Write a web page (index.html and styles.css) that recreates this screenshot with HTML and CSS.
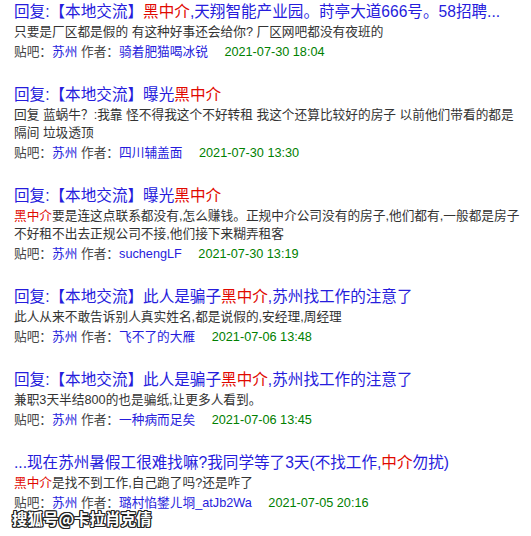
FILE: index.html
```html
<!DOCTYPE html>
<html lang="zh-CN">
<head>
    <meta charset="UTF-8">
    <title>贴吧搜索</title>
    <link rel="stylesheet" href="styles.css">
</head>
<body>
    <div class="s_post_list">
        <div class="s_post">
            <div class="p_title"><a href="#">回复:【本地交流】<em>黑中介</em>,天翔智能产业园。莳亭大道666号。58招聘...</a></div>
            <div class="p_content">只要是厂区都是假的 有这种好事还会给你? 厂区网吧都没有夜班的</div>
            <div class="p_meta">贴吧：<a href="#">苏州</a> 作者：<a href="#">骑着肥猫喝冰锐</a> <span class="p_date">2021-07-30 18:04</span></div>
        </div>

        <div class="s_post">
            <div class="p_title"><a href="#">回复:【本地交流】曝光<em>黑中介</em></a></div>
            <div class="p_content">回复 蓝蜗牛？:我靠 怪不得我这个不好转租 我这个还算比较好的房子 以前他们带看的都是隔间 垃圾透顶</div>
            <div class="p_meta">贴吧：<a href="#">苏州</a> 作者：<a href="#">四川辅盖面</a> <span class="p_date">2021-07-30 13:30</span></div>
        </div>

        <div class="s_post">
            <div class="p_title"><a href="#">回复:【本地交流】曝光<em>黑中介</em></a></div>
            <div class="p_content"><em>黑中介</em>要是连这点联系都没有,怎么赚钱。正规中介公司没有的房子,他们都有,一般都是房子不好租不出去正规公司不接,他们接下来糊弄租客</div>
            <div class="p_meta">贴吧：<a href="#">苏州</a> 作者：<a href="#">suchengLF</a> <span class="p_date">2021-07-30 13:19</span></div>
        </div>

        <div class="s_post">
            <div class="p_title"><a href="#">回复:【本地交流】此人是骗子<em>黑中介</em>,苏州找工作的注意了</a></div>
            <div class="p_content">此人从来不敢告诉别人真实姓名,都是说假的,安经理,周经理</div>
            <div class="p_meta">贴吧：<a href="#">苏州</a> 作者：<a href="#">飞不了的大雁</a> <span class="p_date">2021-07-06 13:48</span></div>
        </div>

        <div class="s_post">
            <div class="p_title"><a href="#">回复:【本地交流】此人是骗子<em>黑中介</em>,苏州找工作的注意了</a></div>
            <div class="p_content">兼职3天半结800的也是骗纸,让更多人看到。</div>
            <div class="p_meta">贴吧：<a href="#">苏州</a> 作者：<a href="#">一种病而足矣</a> <span class="p_date">2021-07-06 13:45</span></div>
        </div>

        <div class="s_post s_post_last">
            <div class="p_title"><a href="#">...现在苏州暑假工很难找嘛?我同学等了3天(不找工作,<em>中介</em>勿扰)</a></div>
            <div class="p_content"><em>黑中介</em>是找不到工作,自己跑了吗?还是咋了</div>
            <div class="p_meta">贴吧：<a href="#">苏州</a> 作者：<a href="#">璐村惂鐢ㄦ埛_atJb2Wa</a> <span class="p_date">2021-07-05 20:16</span></div>
        </div>

        <div class="s_post">
            <div class="p_title"><a href="#">...苏州工业园区找工作的兄弟们注意了这家公司就是<em>中介</em>骗子</a></div>
        </div>
    </div>

    <div class="watermark">搜狐号@卡拉肖克倩</div>
</body>
</html>
```

FILE: styles.css
```css
* {
    margin: 0;
    padding: 0;
    box-sizing: border-box;
}

body {
    background-color: #fff;
    color: #333;
    font-family: Arial, 'Liberation Sans', 'Noto Sans CJK SC', sans-serif;
    font-size: 12.7px;
    height: 536px;
    overflow: hidden;
    position: relative;
}

a {
    color: #261cdc;
    text-decoration: none;
}

em {
    font-style: normal;
    color: #e10900;
}

.s_post_list {
    padding-left: 14px;
    width: 524px;
}

.s_post {
    margin-bottom: 20px;
}

.s_post_last {
    margin-bottom: 19px;
}

.p_title {
    font-size: 15.6px;
    line-height: 23px;
    white-space: nowrap;
}

.p_content {
    line-height: 18px;
}

.p_meta {
    line-height: 22px;
    color: #444;
}

.p_date {
    color: #008000;
    margin-left: 13px;
}

.watermark {
    position: absolute;
    left: 12px;
    top: 509px;
    font-size: 15.5px;
    font-weight: bold;
    line-height: 18px;
    color: #fff;
    font-family: 'Noto Sans CJK SC', sans-serif;
    text-shadow:
        1px 0 0 #222, -1px 0 0 #222, 0 1px 0 #222, 0 -1px 0 #222,
        1px 1px 0 #222, -1px -1px 0 #222, 1px -1px 0 #222, -1px 1px 0 #222;
}
```
